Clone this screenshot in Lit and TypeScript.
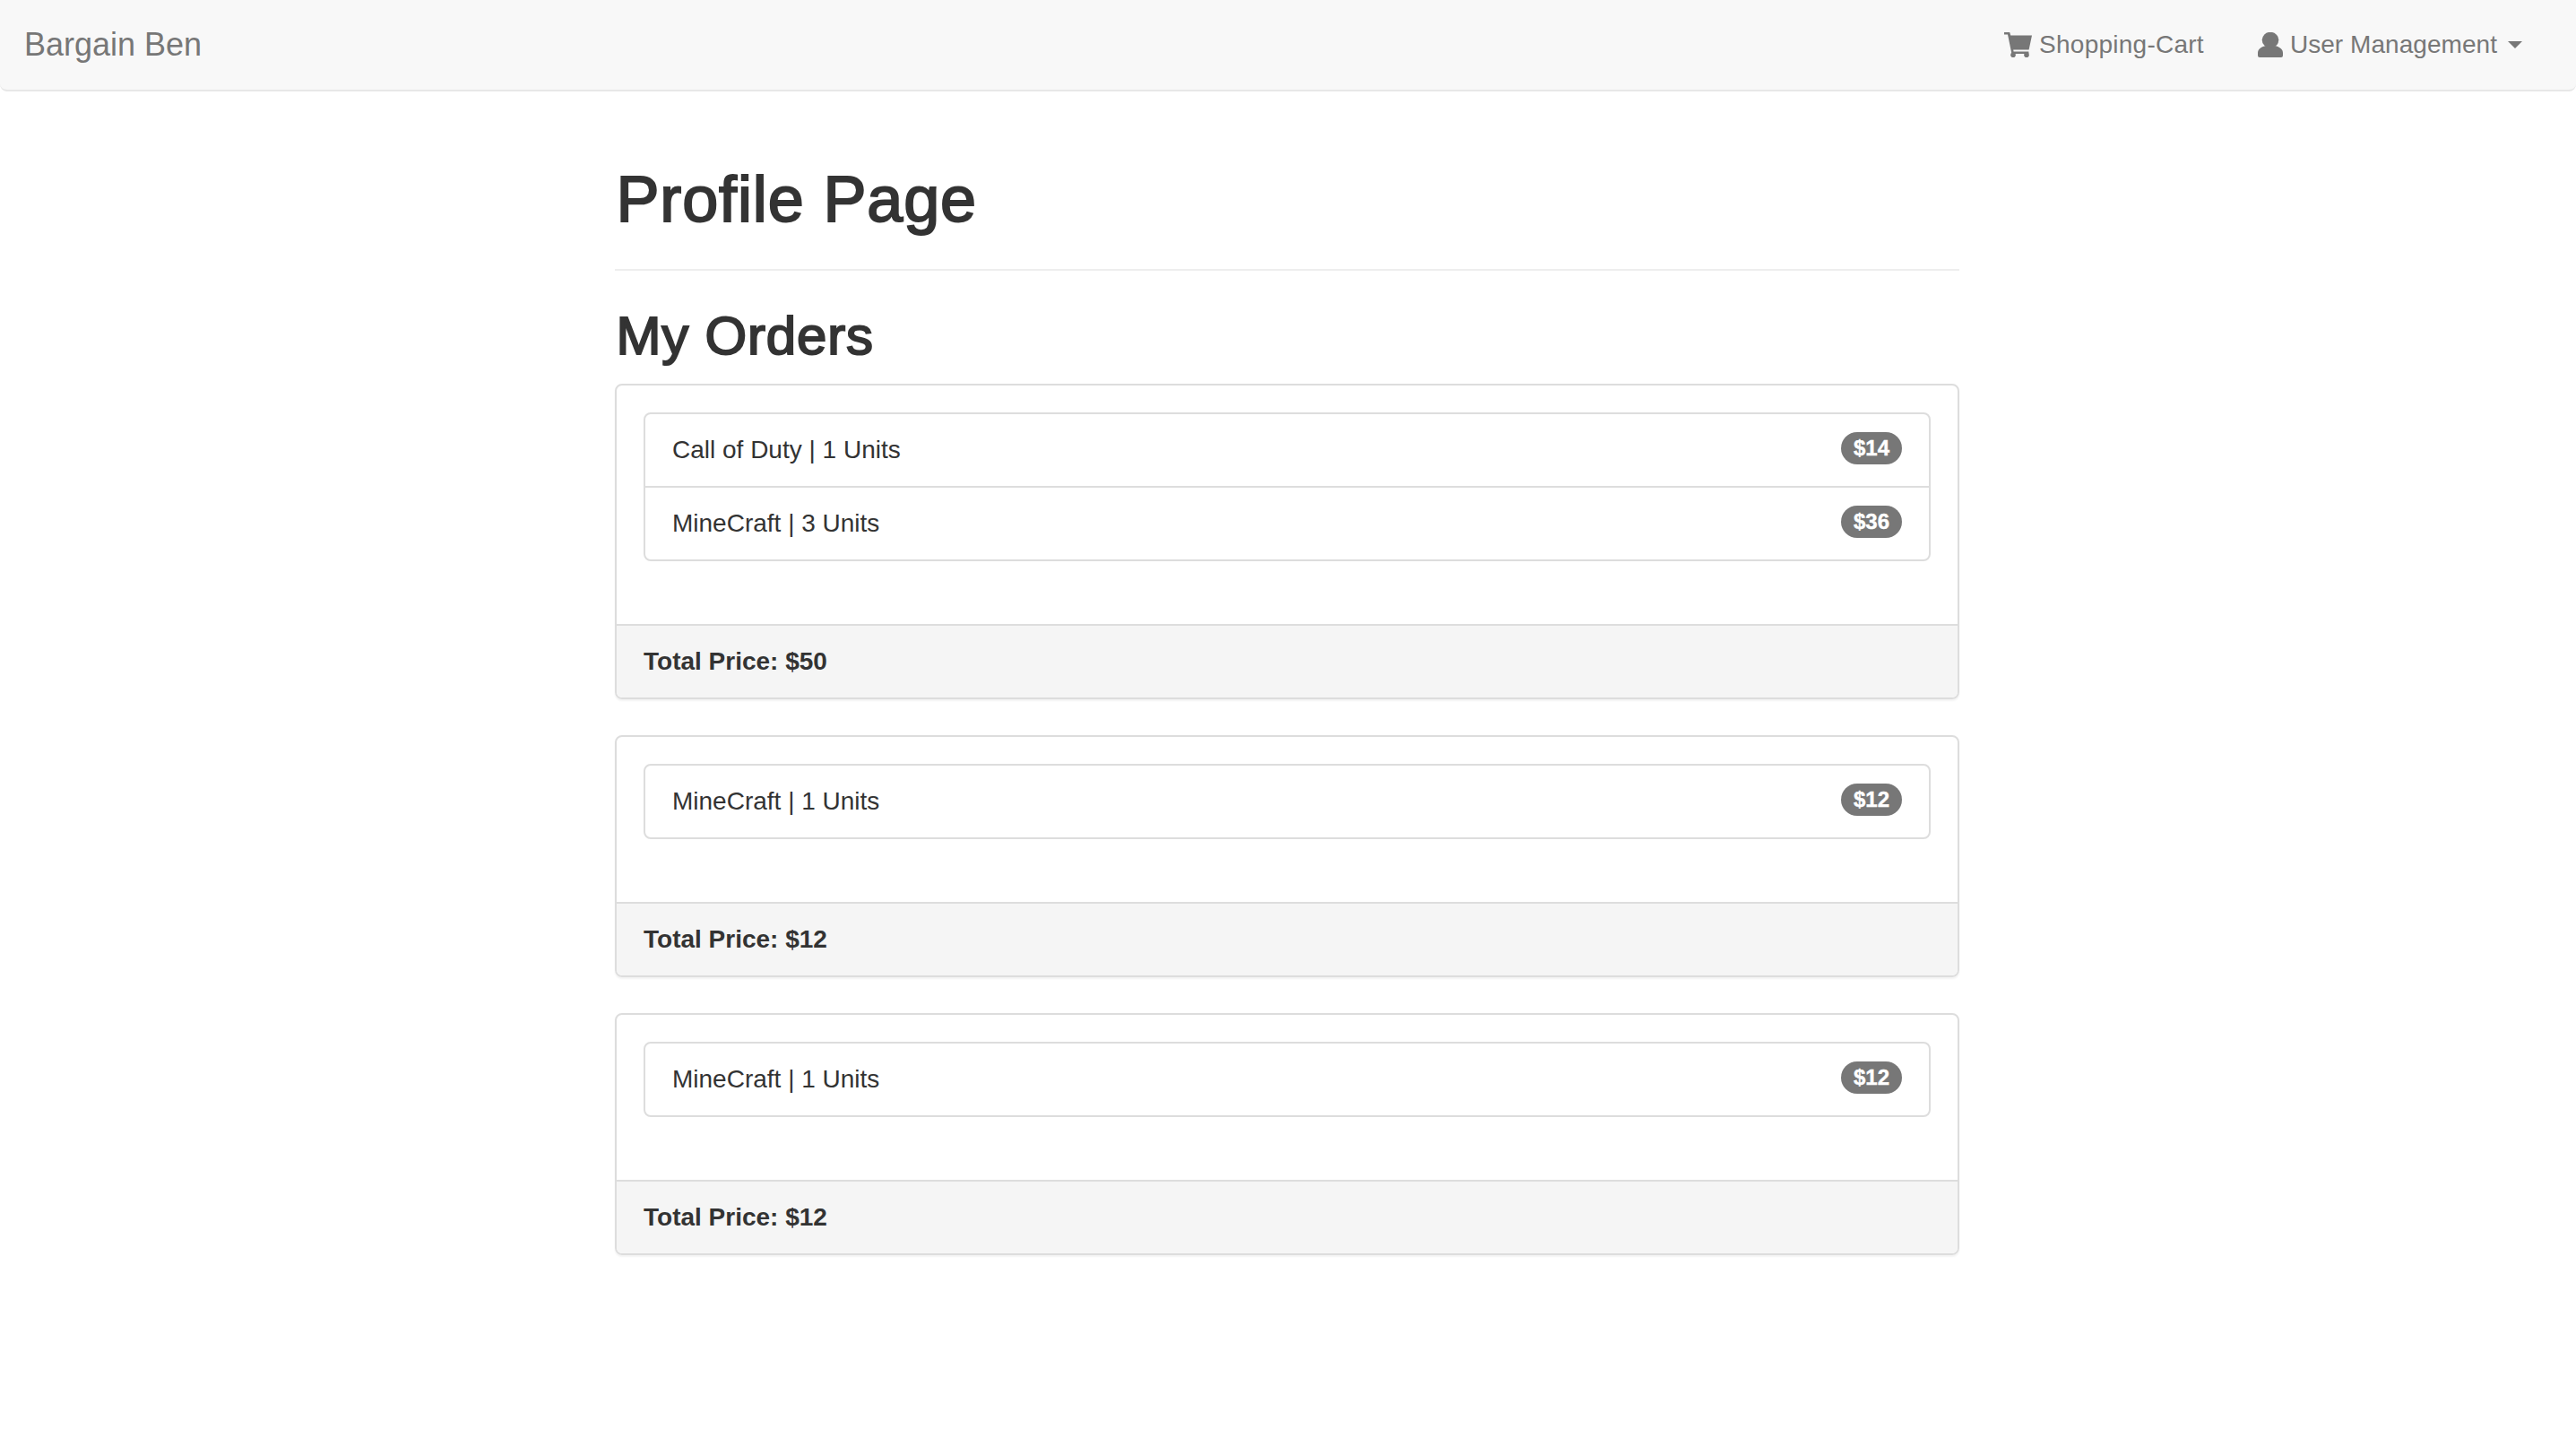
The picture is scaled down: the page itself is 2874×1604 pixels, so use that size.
import { LitElement, html, css, svg } from "lit";
import { customElement } from "lit/decorators.js";

interface Item { name: string; units: number; price: number }
const orders: { items: Item[]; total: number }[] = [
  { items: [{ name: "Call of Duty", units: 1, price: 14 }, { name: "MineCraft", units: 3, price: 36 }], total: 50 },
  { items: [{ name: "MineCraft", units: 1, price: 12 }], total: 12 },
  { items: [{ name: "MineCraft", units: 1, price: 12 }], total: 12 },
];

const cart = svg`<path d="M0 0h6.2l1 3.4H31l-3.4 16H10.2l.4 2H27.4v2.6H8.4L4 2.6H0z"/><circle cx="10" cy="25.2" r="2.8"/><circle cx="25" cy="25.2" r="2.8"/>`;
const user = svg`<ellipse cx="14" cy="8.6" rx="9.3" ry="8.8"/><path d="M0 26V23C0 18.5 4.5 16 9 15Q14 18.5 19 15C23.5 16 28 18.5 28 23V26Q28 28 26 28H2Q0 28 0 26Z"/>`;

@customElement("app-root")
export class AppRoot extends LitElement {
  static styles = css`
    :host { display: block; font-family: "Liberation Sans", Arial, sans-serif; font-size: 28px; line-height: 40px; color: #333; background: #fff; min-height: 1604px; }
    .nav { display: flex; align-items: center; justify-content: space-between; height: 102px; box-sizing: border-box; padding: 0 60px 0 30px; background: #f8f8f8; border-bottom: 2px solid #e7e7e7; border-radius: 0 0 8px 8px; color: #777; }
    .brand { font-size: 36px; margin-left: -3px; }
    .links { display: flex; align-items: center; }
    .link { display: flex; align-items: center; }
    .cart-link { letter-spacing: .25px; }
    .user-link { margin-left: 60px; letter-spacing: .05px; }
    .ico { fill: #777; display: block; margin-right: 8px; }
    .caret { width: 0; height: 0; margin-left: 12px; border-left: 8px solid transparent; border-right: 8px solid transparent; border-top: 8px solid #777; }
    .wrap { padding-right: 2px; }
    .main { width: 1500px; margin: 0 auto; }
    .header { margin: 80px 0 40px; padding-bottom: 38px; border-bottom: 2px solid #eee; }
    h1, h3 { margin: 0; padding-left: 1.5px; font-weight: 400; -webkit-text-stroke: 2px #333; }
    h1 { font-size: 72px; line-height: 80px; letter-spacing: .85px; }
    h3 { margin-bottom: 20px; font-size: 60px; line-height: 66px; letter-spacing: .8px; }
    .panel { margin-bottom: 40px; border: 2px solid #ddd; border-radius: 8px; box-shadow: 0 2px 2px rgba(0,0,0,.05); overflow: hidden; }
    .body { padding: 30px; }
    .list { margin-bottom: 40px; border: 2px solid #ddd; border-radius: 8px; }
    .row { display: flex; justify-content: space-between; align-items: flex-start; padding: 20px 30px; height: 80px; box-sizing: border-box; }
    .row + .row { border-top: 2px solid #ddd; height: 82px; }
    .badge { min-width: 20px; padding: 6px 14px; font-size: 24px; line-height: 24px; font-weight: 700; color: #fff; background: #777; border-radius: 20px; -webkit-text-stroke: .4px #fff; }
    .foot { padding: 20px 30px; background: #f5f5f5; border-top: 2px solid #ddd; font-weight: 700; }
  `;

  render() {
    return html`
      <nav class="nav">
        <span class="brand">Bargain Ben</span>
        <div class="links">
          <span class="link cart-link"><svg class="ico" width="31" height="28" viewBox="0 0 31 28">${cart}</svg>Shopping-Cart</span>
          <span class="link user-link"><svg class="ico" width="28" height="28" viewBox="0 0 28 28">${user}</svg>User Management<span class="caret"></span></span>
        </div>
      </nav>
      <div class="wrap">
        <main class="main">
          <div class="header"><h1>Profile Page</h1></div>
          <h3>My Orders</h3>
          ${orders.map(o => html`
            <section class="panel">
              <div class="body">
                <div class="list">
                  ${o.items.map(i => html`<div class="row"><span>${i.name} | ${i.units} Units</span><span class="badge">$${i.price}</span></div>`)}
                </div>
              </div>
              <div class="foot">Total Price: $${o.total}</div>
            </section>`)}
        </main>
      </div>
    `;
  }
}
